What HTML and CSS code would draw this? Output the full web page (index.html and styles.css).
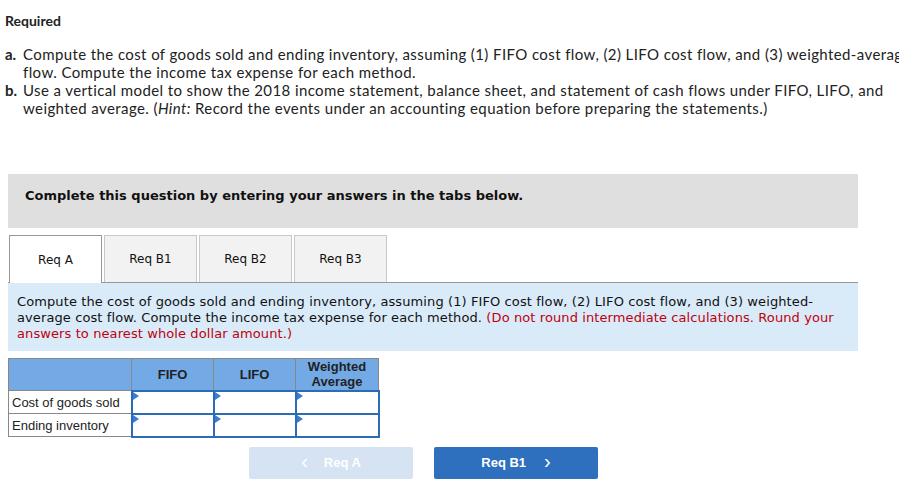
FILE: index.html
```html
<!DOCTYPE html>
<html>
<head>
<meta charset="utf-8">
<link rel="stylesheet" href="styles.css">
</head>
<body>
<div class="page">
  <section class="required">
    <h3 class="req-title">Required</h3>
    <ol class="req-list">
      <li><b>a.</b><span class="item-text"><span class="ln">Compute the cost of goods sold and ending inventory, assuming (1) FIFO cost flow, (2) LIFO cost flow, and (3) weighted-average cost</span><span class="ln">flow. Compute the income tax expense for each method.</span></span></li>
      <li><b>b.</b><span class="item-text"><span class="ln">Use a vertical model to show the 2018 income statement, balance sheet, and statement of cash flows under FIFO, LIFO, and</span><span class="ln">weighted average. (<i>Hint:</i> Record the events under an accounting equation before preparing the statements.)</span></span></li>
    </ol>
  </section>

  <div class="question">
    <div class="banner">Complete this question by entering your answers in the tabs below.</div>

    <div class="tabs">
      <div class="tab active">Req A</div>
      <div class="tab">Req B1</div>
      <div class="tab">Req B2</div>
      <div class="tab">Req B3</div>
    </div>

    <div class="prompt">Compute the cost of goods sold and ending inventory, assuming (1) FIFO cost flow, (2) LIFO cost flow, and (3) weighted-average cost flow. Compute the income tax expense for each method. <span class="warn">(Do not round intermediate calculations. Round your answers to nearest whole dollar amount.)</span></div>

    <table class="grid">
      <thead>
        <tr><th class="blank"></th><th>FIFO</th><th>LIFO</th><th>Weighted<br>Average</th></tr>
      </thead>
      <tbody>
        <tr><td class="label">Cost of goods sold</td><td class="cell"><span class="flag"></span></td><td class="cell"><span class="flag"></span></td><td class="cell"><span class="flag"></span></td></tr>
        <tr><td class="label">Ending inventory</td><td class="cell"><span class="flag"></span></td><td class="cell"><span class="flag"></span></td><td class="cell"><span class="flag"></span></td></tr>
      </tbody>
    </table>

    <div class="nav">
      <button class="btn prev"><span class="chev">&#8249;</span>Req A</button>
      <button class="btn next">Req B1<span class="chev">&#8250;</span></button>
    </div>
  </div>
</div>
</body>
</html>
```

FILE: styles.css
```css
html, body {
  margin: 0;
  padding: 0;
  background: #fff;
  overflow: hidden;
}
.page {
  width: 899px;
  overflow: hidden;
}
.required {
  padding: 0 0 0 5px;
  font-family: "Lato", "Open Sans", sans-serif;
  color: #222;
}
.req-title {
  margin: 0;
  padding-top: 12px;
  font-size: 14px;
  font-weight: bold;
  line-height: 18px;
}
.req-list {
  list-style: none;
  margin: 15px 0 0 0;
  padding: 0;
  font-size: 15px;
  line-height: 18px;
  letter-spacing: 0.4px;
}
.req-list li {
  display: flex;
  white-space: nowrap;
}
.req-list li b {
  width: 18px;
  flex: none;
  letter-spacing: 0;
}
.item-text {
  display: flex;
  flex-direction: column;
}
.question {
  margin: 0 0 0 8px;
  width: 850px;
}
.banner {
  margin-top: 57px;
  height: 54px;
  background: #dfdfdf;
  font-family: "DejaVu Sans", Verdana, sans-serif;
  font-weight: bold;
  font-size: 13px;
  line-height: 16px;
  color: #111;
  padding: 14px 0 0 17px;
  box-sizing: border-box;
}
.tabs {
  display: flex;
  gap: 2px;
  margin-top: 7px;
  border-bottom: 1px solid #999;
  padding-left: 1px;
  height: 47px;
  box-sizing: content-box;
}
.tab {
  width: 93px;
  height: 47px;
  box-sizing: border-box;
  border: 1px solid #c8c8c8;
  border-bottom: none;
  background: #f2f2f2;
  font-family: "DejaVu Sans", Verdana, sans-serif;
  font-size: 12px;
  color: #111;
  display: flex;
  align-items: center;
  justify-content: center;
}
.tab.active {
  width: 93px;
  background: #fff;
  border: 1px solid #999;
  border-bottom: none;
  height: 48px;
  margin-bottom: -1px;
  position: relative;
}
.prompt {
  background: #d9ebf9;
  padding: 11px 9px 9px 9px;
  font-family: "DejaVu Sans", Verdana, sans-serif;
  font-size: 13px;
  line-height: 16px;
  letter-spacing: 0.1px;
  color: #111;
  height: 68px;
  box-sizing: border-box;
}
.warn {
  color: #c0000c;
}
.grid {
  margin-top: 7px;
  border-collapse: collapse;
  font-family: "Liberation Sans", Arial, sans-serif;
  font-size: 13px;
}
.grid th {
  background: #73aae6;
  border: 1px solid #888;
  height: 32px;
  padding: 0;
  font-weight: bold;
  color: #222;
  line-height: 15px;
  box-sizing: border-box;
}
.grid th.blank { width: 123px; }
.grid th:nth-child(2), .grid th:nth-child(3) { width: 82px; }
.grid th:nth-child(4) { width: 83px; }
.grid td {
  border: 1px solid #888;
  height: 23px;
  padding: 0;
  box-sizing: border-box;
}
.grid td.label {
  padding-left: 3px;
  color: #222;
  white-space: nowrap;
}
.grid td.cell {
  border: 2px solid #2e6bb5;
  position: relative;
  background: #fff;
}
.flag {
  position: absolute;
  left: 0;
  top: 0;
  width: 0;
  height: 0;
  border-top: 4px solid transparent;
  border-bottom: 4px solid transparent;
  border-left: 6px solid #3a7bd5;
}
.nav {
  display: flex;
  gap: 21px;
  margin: 9px 0 0 241px;
}
.btn {
  width: 164px;
  height: 32px;
  border: none;
  border-radius: 2px;
  font-family: "Liberation Sans", Arial, sans-serif;
  font-size: 13px;
  font-weight: bold;
  color: #fff;
  display: flex;
  align-items: center;
  justify-content: center;
  padding: 0;
}
.btn.prev {
  background: #d6e3f3;
}
.btn.next {
  background: #2e6fbe;
}
.chev {
  font-size: 20px;
  font-weight: normal;
  line-height: 1;
  margin-top: -3px;
}
.prev .chev { margin-right: 16px; }
.next .chev { margin-left: 18px; }
```
